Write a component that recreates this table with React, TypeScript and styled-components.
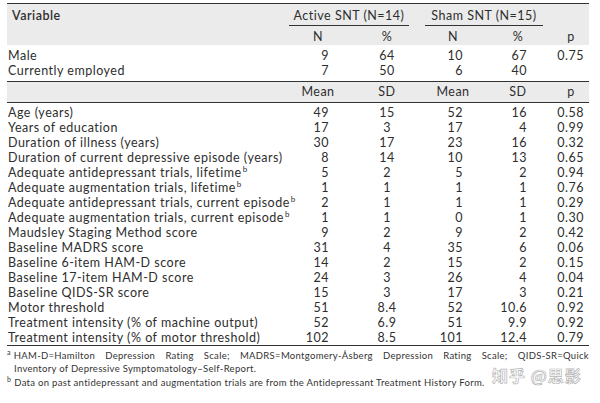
import React from "react";
import styled, { createGlobalStyle } from "styled-components";

const GlobalStyle = createGlobalStyle`
    body {
        margin: 0;
        background: #ffffff;
        font-family: Lato, "Noto Sans", sans-serif;
        color: #2e2e2e;
    }
`;

const COLUMNS = "278px 66px 72px 60px 70px 36px";

const Page = styled.div`
    position: relative;
    width: 600px;
    height: 403px;
    box-sizing: border-box;
    padding: 3px 11px 0 7px;
    overflow: hidden;
`;

const Table = styled.div`
    width: 582px;
    border-top: 1.5px solid #333;
    font-size: 12.5px;
    letter-spacing: 0.5px;
`;

const HeadBlock = styled.div`
    background: #ebebeb;
`;

const Row = styled.div<{ $height?: number }>`
    display: grid;
    grid-template-columns: ${COLUMNS};
    line-height: ${(p) => (p.$height ? `${p.$height}px` : "15px")};
`;

const HeadCell = styled.div`
    text-align: center;
`;

const VariableHead = styled.div`
    padding: 3px 0 0 5px;
    line-height: 18px;
    font-weight: 600;
`;

const GroupCell = styled.div`
    grid-column: span 2;
    padding-top: 3px;
`;

const GroupLabel = styled.div<{ $left: number; $right: number }>`
    margin: 0 ${(p) => p.$right}px 0 ${(p) => p.$left}px;
    line-height: 18px;
    text-align: center;
    border-bottom: 1px solid #333;
`;

const SubHeadRow = styled(Row)`
    padding-top: 2px;
`;

const CountBlock = styled.div`
    padding: 4px 0 3px;
`;

const StatsHead = styled.div`
    background: #ebebeb;
    border-top: 1.5px solid #333;
    border-bottom: 1px solid #333;
`;

const BodyBlock = styled.div`
    padding-top: 1.5px;
    border-bottom: 1.5px solid #333;
`;

const Label = styled.div`
    padding-left: 1px;
    white-space: nowrap;
`;

const Value = styled.div<{ $align: "right" | "center"; $pad: number }>`
    text-align: ${(p) => p.$align};
    padding-right: ${(p) => p.$pad}px;
`;

const Sup = styled.sup`
    font-size: 8px;
    line-height: 0;
    vertical-align: 5px;
    margin-left: 1px;
`;

const Notes = styled.div`
    padding-top: 3px;
    width: 582px;
    font-size: 9.5px;
    line-height: 13.5px;
    letter-spacing: 0.3px;
    color: #333;
`;

const NoteLine = styled.div<{ $justify?: boolean; $indent?: boolean }>`
    white-space: nowrap;
    padding-left: ${(p) => (p.$indent ? "7px" : "0")};
    text-align: ${(p) => (p.$justify ? "justify" : "left")};
    text-align-last: ${(p) => (p.$justify ? "justify" : "auto")};
`;

const NoteMark = styled.sup`
    font-size: 7px;
    line-height: 0;
    vertical-align: 4px;
    margin-right: 3px;
`;

const Watermark = styled.div`
    position: absolute;
    left: 492px;
    top: 365px;
    font-family: "Noto Sans CJK SC", sans-serif;
    font-size: 16px;
    font-weight: 700;
    line-height: 20px;
    letter-spacing: 1px;
    color: rgba(255, 255, 255, 0.75);
    -webkit-text-stroke: 0.7px #b5b5b5;
`;

const ALIGNS: { align: "right" | "center"; pad: number }[] = [
    { align: "right", pad: 22 },
    { align: "center", pad: 0 },
    { align: "right", pad: 20 },
    { align: "right", pad: 26 },
    { align: "right", pad: 5 },
];

type DataRow = { label: string; note?: string; values: string[] };

const counts: DataRow[] = [
    { label: "Male", values: ["9", "64", "10", "67", "0.75"] },
    { label: "Currently employed", values: ["7", "50", "6", "40", ""] },
];

const stats: DataRow[] = [
    { label: "Age (years)", values: ["49", "15", "52", "16", "0.58"] },
    { label: "Years of education", values: ["17", "3", "17", "4", "0.99"] },
    { label: "Duration of illness (years)", values: ["30", "17", "23", "16", "0.32"] },
    { label: "Duration of current depressive episode (years)", values: ["8", "14", "10", "13", "0.65"] },
    { label: "Adequate antidepressant trials, lifetime", note: "b", values: ["5", "2", "5", "2", "0.94"] },
    { label: "Adequate augmentation trials, lifetime", note: "b", values: ["1", "1", "1", "1", "0.76"] },
    { label: "Adequate antidepressant trials, current episode", note: "b", values: ["2", "1", "1", "1", "0.29"] },
    { label: "Adequate augmentation trials, current episode", note: "b", values: ["1", "1", "0", "1", "0.30"] },
    { label: "Maudsley Staging Method score", values: ["9", "2", "9", "2", "0.42"] },
    { label: "Baseline MADRS score", values: ["31", "4", "35", "6", "0.06"] },
    { label: "Baseline 6-item HAM-D score", values: ["14", "2", "15", "2", "0.15"] },
    { label: "Baseline 17-item HAM-D score", values: ["24", "3", "26", "4", "0.04"] },
    { label: "Baseline QIDS-SR score", values: ["15", "3", "17", "3", "0.21"] },
    { label: "Motor threshold", values: ["51", "8.4", "52", "10.6", "0.92"] },
    { label: "Treatment intensity (% of machine output)", values: ["52", "6.9", "51", "9.9", "0.92"] },
    { label: "Treatment intensity (% of motor threshold)", values: ["102", "8.5", "101", "12.4", "0.79"] },
];

const renderRow = (row: DataRow, height?: number) => (
    <Row key={row.label} $height={height}>
        <Label>
            {row.label}
            {row.note && <Sup>{row.note}</Sup>}
        </Label>
        {row.values.map((v, i) => (
            <Value key={i} $align={ALIGNS[i].align} $pad={ALIGNS[i].pad}>
                {v}
            </Value>
        ))}
    </Row>
);

const App: React.FC = () => {
    return (
        <Page>
            <GlobalStyle />
            <Table>
                <HeadBlock>
                    <Row>
                        <VariableHead>Variable</VariableHead>
                        <GroupCell>
                            <GroupLabel $left={4} $right={14}>Active SNT (N=14)</GroupLabel>
                        </GroupCell>
                        <GroupCell>
                            <GroupLabel $left={2} $right={10}>Sham SNT (N=15)</GroupLabel>
                        </GroupCell>
                    </Row>
                    <SubHeadRow $height={17}>
                        <div />
                        <HeadCell>N</HeadCell>
                        <HeadCell>%</HeadCell>
                        <HeadCell>N</HeadCell>
                        <HeadCell>%</HeadCell>
                        <HeadCell>p</HeadCell>
                    </SubHeadRow>
                </HeadBlock>
                <CountBlock>{counts.map((r) => renderRow(r, 14.5))}</CountBlock>
                <StatsHead>
                    <Row $height={20}>
                        <div />
                        <HeadCell>Mean</HeadCell>
                        <HeadCell>SD</HeadCell>
                        <HeadCell>Mean</HeadCell>
                        <HeadCell>SD</HeadCell>
                        <HeadCell>p</HeadCell>
                    </Row>
                </StatsHead>
                <BodyBlock>{stats.map((r) => renderRow(r))}</BodyBlock>
            </Table>
            <Notes>
                <NoteLine $justify>
                    <NoteMark>a</NoteMark>
                    HAM-D=Hamilton Depression Rating Scale; MADRS=Montgomery-Åsberg Depression Rating Scale; QIDS-SR=Quick
                </NoteLine>
                <NoteLine $indent>Inventory of Depressive Symptomatology–Self-Report.</NoteLine>
                <NoteLine>
                    <NoteMark>b</NoteMark>
                    Data on past antidepressant and augmentation trials are from the Antidepressant Treatment History Form.
                </NoteLine>
            </Notes>
            <Watermark>知乎 @思影</Watermark>
        </Page>
    );
};

export default App;
